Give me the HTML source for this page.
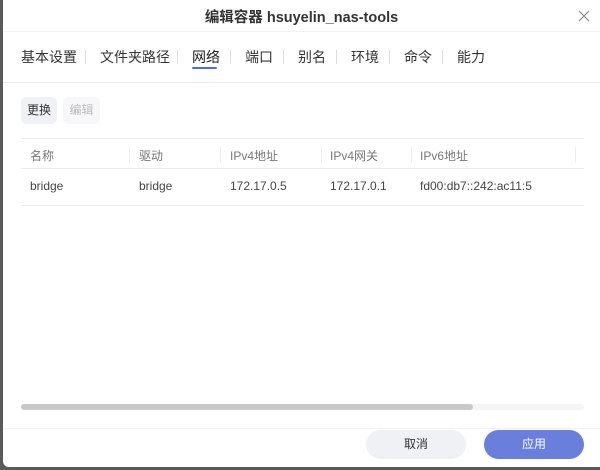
<!DOCTYPE html>
<html><head><meta charset="utf-8"><style>
*{margin:0;padding:0;box-sizing:border-box}
body{width:600px;height:470px;background:#5a5a5a;position:relative;overflow:hidden;font-family:"Liberation Sans","Noto Sans CJK SC",sans-serif;color:#333}
.dlg{position:absolute;left:3px;top:0;width:600px;height:467px;background:#fff;border-radius:0 0 0 6px}
.a{position:absolute;white-space:nowrap}
.title{left:0;width:597px;top:6px;text-align:center;font-size:14.5px;font-weight:bold;color:#333}
.line{position:absolute;height:1px;background:#ececec}
.tab{position:absolute;top:47px;font-size:14px;color:#333}
.sep{position:absolute;top:50px;width:1px;height:14px;background:#dcdcdc}
.th{position:absolute;top:147px;font-size:12px;color:#777}
.td{position:absolute;top:179px;font-size:12px;color:#444}
.cs{position:absolute;top:147px;width:1px;height:16px;background:#ededed}
.btn{position:absolute;border-radius:11px;font-size:12px;text-align:center;line-height:22px}
</style></head><body>
<div class="dlg">
<div class="a title">编辑容器 hsuyelin_nas-tools</div>
<svg style="position:absolute;left:575px;top:10px" width="12" height="12" viewBox="0 0 12 12"><path d="M1 1L11 11M11 1L1 11" stroke="#888" stroke-width="1.2" fill="none"/></svg>
<div class="line" style="left:0;top:31px;width:597px;background:#f2f2f2"></div>
<div class="tab" style="left:18px">基本设置</div><div class="sep" style="left:82px"></div>
<div class="tab" style="left:97px">文件夹路径</div><div class="sep" style="left:174px"></div>
<div class="tab" style="left:189px;color:#222">网络</div><div class="sep" style="left:227px"></div>
<div style="position:absolute;left:189px;top:67px;width:25px;height:2px;background:#4a6ee0;border-radius:1px"></div>
<div class="tab" style="left:242px">端口</div><div class="sep" style="left:280px"></div>
<div class="tab" style="left:295px">别名</div><div class="sep" style="left:333px"></div>
<div class="tab" style="left:348px">环境</div><div class="sep" style="left:386px"></div>
<div class="tab" style="left:401px">命令</div><div class="sep" style="left:439px"></div>
<div class="tab" style="left:454px">能力</div>
<div class="line" style="left:0;top:82px;width:597px"></div>
<div class="btn" style="left:18px;top:97px;width:36px;height:27px;line-height:27px;border-radius:5px;background:#f0f1f5;color:#333">更换</div>
<div class="btn" style="left:60px;top:97px;width:37px;height:27px;line-height:27px;border-radius:5px;background:#f7f7f9;color:#bbb">编辑</div>
<div class="line" style="left:18px;top:138px;width:563px"></div>
<div class="th" style="left:27px">名称</div><div class="cs" style="left:126px"></div>
<div class="th" style="left:136px">驱动</div><div class="cs" style="left:217px"></div>
<div class="th" style="left:227px">IPv4地址</div><div class="cs" style="left:318px"></div>
<div class="th" style="left:327px">IPv4网关</div><div class="cs" style="left:408px"></div>
<div class="th" style="left:417px">IPv6地址</div><div class="cs" style="left:572px"></div>
<div class="line" style="left:18px;top:168px;width:563px"></div>
<div class="td" style="left:27px">bridge</div>
<div class="td" style="left:136px">bridge</div>
<div class="td" style="left:227px">172.17.0.5</div>
<div class="td" style="left:327px">172.17.0.1</div>
<div class="td" style="left:417px">fd00:db7::242:ac11:5</div>
<div class="line" style="left:18px;top:205px;width:563px"></div>
<div style="position:absolute;left:18px;top:404px;width:563px;height:6px;background:#f5f5f5;border-radius:3px"></div>
<div style="position:absolute;left:18px;top:404px;width:452px;height:6px;background:#c8c8c8;border-radius:3px"></div>
<div class="line" style="left:0;top:428px;width:597px;background:#f2f2f2"></div>
<div class="btn" style="left:363px;top:430px;width:100px;height:29px;line-height:29px;border-radius:15px;background:#f0f1f5;color:#333">取消</div>
<div class="btn" style="left:481px;top:430px;width:100px;height:29px;line-height:29px;border-radius:15px;background:#6a7fdc;color:#fff">应用</div>
</div>
</body></html>
